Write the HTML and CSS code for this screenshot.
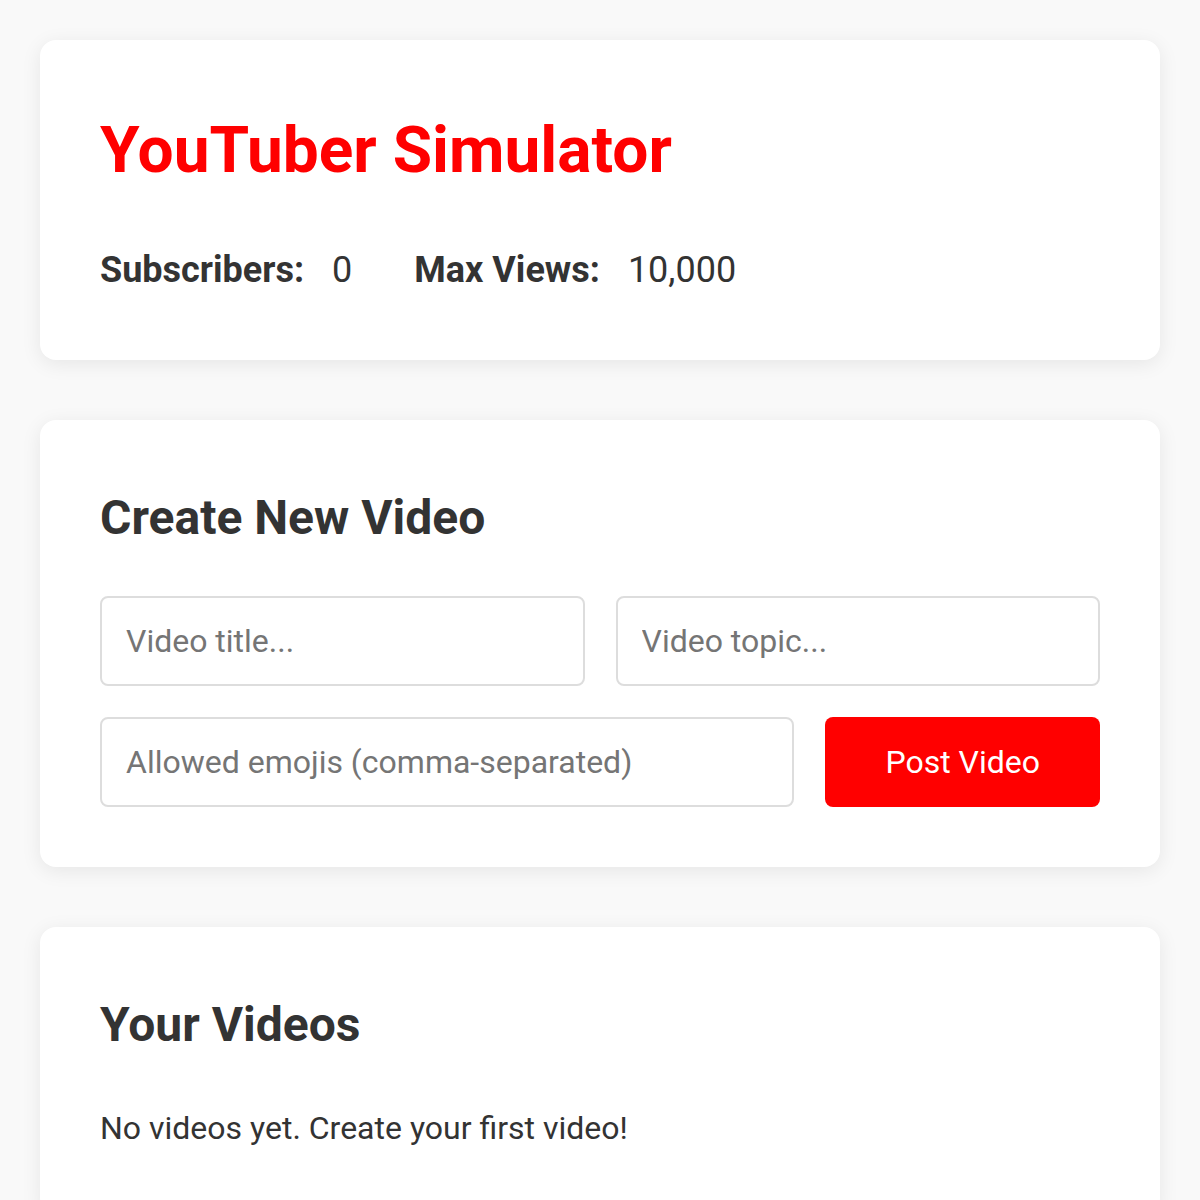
FILE: index.html
```html
<!DOCTYPE html>
<html lang="en">
<head>
<meta charset="utf-8">
<title>YouTuber Simulator</title>
<link rel="stylesheet" href="styles.css">
</head>
<body>
<main class="app">
  <section class="card">
    <h1 class="title">YouTuber Simulator</h1>
    <div class="stats">
      <div class="stat"><span class="stat-label">Subscribers:</span><span class="stat-value">0</span></div>
      <div class="stat"><span class="stat-label">Max Views:</span><span class="stat-value">10,000</span></div>
    </div>
  </section>
  <section class="card">
    <h2 class="heading">Create New Video</h2>
    <div class="form">
      <div class="row">
        <input class="field" type="text" placeholder="Video title...">
        <input class="field" type="text" placeholder="Video topic...">
      </div>
      <div class="row">
        <input class="field" type="text" placeholder="Allowed emojis (comma-separated)">
        <button class="btn" type="button">Post Video</button>
      </div>
    </div>
  </section>
  <section class="card">
    <h2 class="heading">Your Videos</h2>
    <p class="empty">No videos yet. Create your first video!</p>
  </section>
</main>
</body>
</html>
```
FILE: styles.css
```css
* { box-sizing: border-box; }
html, body { margin: 0; padding: 0; }
body {
  background: #f9f9f9;
  font-family: Roboto, "Liberation Sans", Arial, sans-serif;
  font-size: 32px;
  line-height: 1.6;
  color: #333;
}
.app {
  padding: 40px;
  display: flex;
  flex-direction: column;
  gap: 60px;
}
.card {
  background: #fff;
  border-radius: 16px;
  padding: 60px;
  box-shadow: 0 4px 20px rgba(0, 0, 0, 0.08);
}
.title {
  margin: 0 0 40px;
  font-size: 64px;
  font-weight: 700;
  color: #ff0000;
}
.heading {
  margin: 0 0 39px;
  font-size: 48px;
  font-weight: 700;
  color: #333;
}
.stats {
  display: flex;
  gap: 62px;
  font-size: 36px;
}
.stat-label {
  font-weight: 700;
  margin-right: 28px;
}
.form {
  display: flex;
  flex-direction: column;
  gap: 31px;
}
.row {
  display: flex;
  gap: 31px;
}
.field {
  flex: 1;
  min-width: 0;
  font-family: inherit;
  font-size: 32px;
  line-height: normal;
  padding: 24px;
  border: 2px solid #ddd;
  border-radius: 8px;
  color: #333;
  background: #fff;
}
.field::placeholder { color: #757575; }
.btn {
  font-family: inherit;
  font-size: 32px;
  line-height: normal;
  padding: 24px 60px;
  border: none;
  border-radius: 8px;
  background: #ff0000;
  color: #fff;
}
.empty {
  margin: 0;
}
```
